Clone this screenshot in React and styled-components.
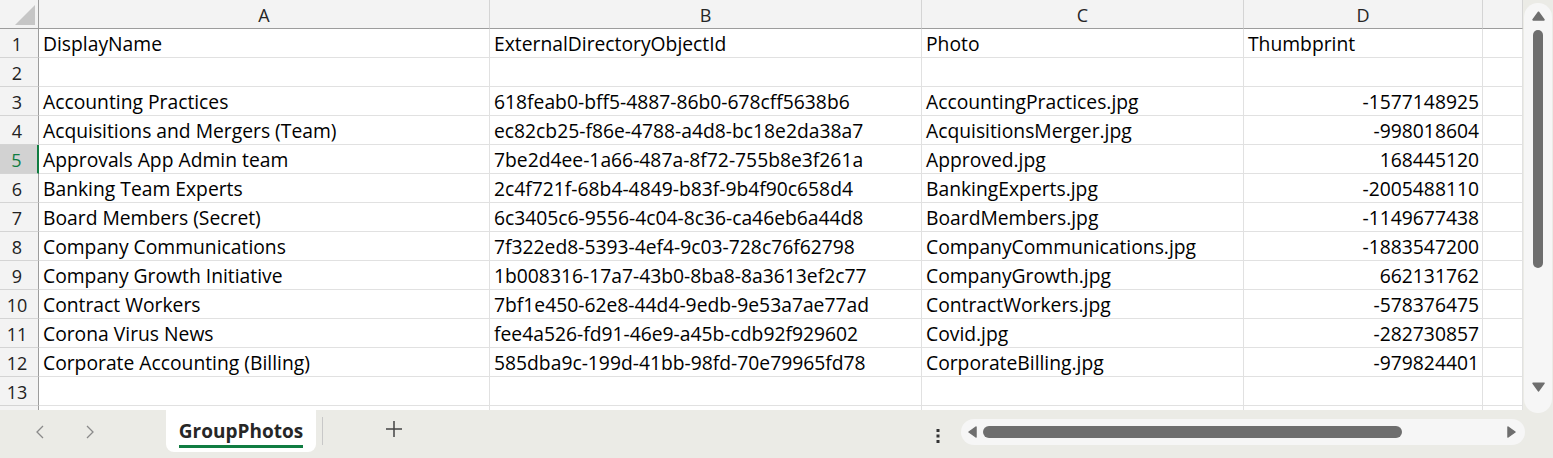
import React from "react"
import styled, { createGlobalStyle } from "styled-components"

const GlobalStyle = createGlobalStyle`
  html, body {
    margin: 0;
    padding: 0;
    background: #ebebe6;
    font-family: "Open Sans", "Noto Sans", sans-serif;
    overflow: hidden;
  }
`

const Window = styled.div`
  width: 1553px;
  height: 458px;
  display: flex;
  flex-direction: column;
  background: #ebebe6;
`

const Main = styled.div`
  display: flex;
  height: 410px;
`

const Sheet = styled.div`
  width: 1523px;
  height: 410px;
  overflow: hidden;
  background: #fff;
  display: grid;
  grid-template-columns: 39px 451px 432px 322px 239px 40px;
  grid-auto-rows: 29px;
  font-size: 19.3px;
`

const Corner = styled.div`
  position: relative;
  background: #f3f3f3;
  border-right: 1px solid #9c9c9c;
  border-bottom: 1px solid #9c9c9c;
  &::after {
    content: "";
    position: absolute;
    right: 3px;
    bottom: 3px;
    width: 0;
    height: 0;
    border-left: 20px solid transparent;
    border-bottom: 20px solid #c6c6c6;
  }
`

const ColHead = styled.div`
  background: #f3f3f3;
  border-right: 1px solid #d4d4d4;
  border-bottom: 1px solid #9c9c9c;
  display: flex;
  align-items: center;
  justify-content: center;
  color: #262626;
  font-size: 18px;
  padding-top: 2px;
`

const RowHead = styled.div`
  background: ${(p) => (p.$active ? "#d2d2d2" : "#f3f3f3")};
  color: ${(p) => (p.$active ? "#107c41" : "#222")};
  border-right: ${(p) => (p.$active ? "2px solid #107c41" : "1px solid #9c9c9c")};
  border-bottom: 1px solid #d4d4d4;
  display: flex;
  align-items: center;
  justify-content: center;
  padding: 1px 4px 0 0;
  font-size: 18px;
`

const Cell = styled.div`
  border-right: 1px solid #e1e1e1;
  border-bottom: 1px solid #e1e1e1;
  display: flex;
  align-items: center;
  justify-content: ${(p) => (p.$num ? "flex-end" : "flex-start")};
  padding: 0 3px 0 4px;
  white-space: nowrap;
  overflow: hidden;
  color: #000;
`

const VScroll = styled.div`
  width: 30px;
  padding: 3px 0 0 1px;
  box-sizing: border-box;
`

const VTrack = styled.div`
  height: 410px;
  width: 28px;
  background: #f6f6f6;
  border-radius: 14px;
  display: flex;
  flex-direction: column;
  align-items: center;
  padding-top: 6px;
  box-sizing: border-box;
`

const VThumb = styled.div`
  width: 10px;
  height: 238px;
  margin-top: 8px;
  border-radius: 5px;
  background: #6e6e6e;
`

const VDown = styled.div`
  margin-top: auto;
  margin-bottom: 15px;
`

const TabBar = styled.div`
  height: 48px;
  display: flex;
  align-items: flex-start;
`

const NavArrows = styled.div`
  display: flex;
  gap: 32px;
  padding: 14px 0 0 33px;
  width: 166px;
  box-sizing: border-box;
`

const Tab = styled.div`
  width: 150px;
  height: 42px;
  background: #fff;
  border-radius: 0 0 8px 8px;
  display: flex;
  justify-content: center;
  padding-top: 9px;
  box-sizing: border-box;
  font-weight: 700;
  font-size: 19px;
  color: #262626;
`

const TabLabel = styled.span`
  border-bottom: 3px solid #107c41;
  height: 26px;
  line-height: 24px;
`

const Divider = styled.div`
  width: 1px;
  height: 28px;
  background: #c8c8c8;
  margin: 7px 0 0 6px;
`

const AddButton = styled.div`
  margin: 10px 0 0 62px;
`

const Spacer = styled.div`
  flex: 1;
`

const Dots = styled.div`
  padding: 16px 21px 0 0;
`

const HTrack = styled.div`
  width: 564px;
  height: 26px;
  margin: 9px 28px 0 0;
  background: #f6f6f6;
  border-radius: 13px;
  display: flex;
  align-items: center;
  padding: 0 8px 0 6px;
  box-sizing: border-box;
`

const HThumb = styled.div`
  width: 419px;
  height: 12px;
  border-radius: 6px;
  background: #6e6e6e;
  margin-left: 4px;
`

const HRight = styled.div`
  margin-left: auto;
  display: flex;
`

const rows = [
  ["DisplayName", "ExternalDirectoryObjectId", "Photo", "Thumbprint"],
  ["", "", "", ""],
  ["Accounting Practices", "618feab0-bff5-4887-86b0-678cff5638b6", "AccountingPractices.jpg", "-1577148925"],
  ["Acquisitions and Mergers (Team)", "ec82cb25-f86e-4788-a4d8-bc18e2da38a7", "AcquisitionsMerger.jpg", "-998018604"],
  ["Approvals App Admin team", "7be2d4ee-1a66-487a-8f72-755b8e3f261a", "Approved.jpg", "168445120"],
  ["Banking Team Experts", "2c4f721f-68b4-4849-b83f-9b4f90c658d4", "BankingExperts.jpg", "-2005488110"],
  ["Board Members (Secret)", "6c3405c6-9556-4c04-8c36-ca46eb6a44d8", "BoardMembers.jpg", "-1149677438"],
  ["Company Communications", "7f322ed8-5393-4ef4-9c03-728c76f62798", "CompanyCommunications.jpg", "-1883547200"],
  ["Company Growth Initiative", "1b008316-17a7-43b0-8ba8-8a3613ef2c77", "CompanyGrowth.jpg", "662131762"],
  ["Contract Workers", "7bf1e450-62e8-44d4-9edb-9e53a7ae77ad", "ContractWorkers.jpg", "-578376475"],
  ["Corona Virus News", "fee4a526-fd91-46e9-a45b-cdb92f929602", "Covid.jpg", "-282730857"],
  ["Corporate Accounting (Billing)", "585dba9c-199d-41bb-98fd-70e79965fd78", "CorporateBilling.jpg", "-979824401"],
  ["", "", "", ""],
  ["", "", "", ""],
]

const Tri = ({ dir, size = 12 }) => {
  const pts = {
    up: "1,10 6,3 11,10",
    down: "1,3 6,10 11,3",
    left: "9,1 2,6 9,11",
    right: "3,1 10,6 3,11",
  }
  return (
    <svg width={size} height={size} viewBox="0 0 12 12">
      <polygon points={pts[dir]} fill="#6e6e6e" stroke="#6e6e6e" strokeWidth="1.5" strokeLinejoin="round" />
    </svg>
  )
}

const Chevron = ({ left }) => (
  <svg width="16" height="16" viewBox="0 0 16 16">
    <path d={left ? "M10 2 L4 8 L10 14" : "M6 2 L12 8 L6 14"} fill="none" stroke="#8a8a8a" strokeWidth="1.3" />
  </svg>
)

export default function App() {
  return (
    <Window>
      <GlobalStyle />
      <Main>
        <Sheet>
          <Corner />
          {["A", "B", "C", "D", ""].map((c, i) => (
            <ColHead key={i}>{c}</ColHead>
          ))}
          {rows.map((r, i) => (
            <React.Fragment key={i}>
              <RowHead $active={i === 4}>{i < 13 ? i + 1 : ""}</RowHead>
              <Cell>{r[0]}</Cell>
              <Cell>{r[1]}</Cell>
              <Cell>{r[2]}</Cell>
              <Cell $num={i > 1}>{r[3]}</Cell>
              <Cell />
            </React.Fragment>
          ))}
        </Sheet>
        <VScroll>
          <VTrack>
            <Tri dir="up" size={13} />
            <VThumb />
            <VDown>
              <Tri dir="down" size={13} />
            </VDown>
          </VTrack>
        </VScroll>
      </Main>
      <TabBar>
        <NavArrows>
          <Chevron left />
          <Chevron />
        </NavArrows>
        <Tab>
          <TabLabel>GroupPhotos</TabLabel>
        </Tab>
        <Divider />
        <AddButton>
          <svg width="18" height="18" viewBox="0 0 18 18">
            <path d="M9 1 V17 M1 9 H17" stroke="#444" strokeWidth="1.5" />
          </svg>
        </AddButton>
        <Spacer />
        <Dots>
          <svg width="4" height="14" viewBox="0 0 4 14">
            <rect x="0.5" y="0" width="3" height="3" fill="#333" />
            <rect x="0.5" y="5.5" width="3" height="3" fill="#333" />
            <rect x="0.5" y="11" width="3" height="3" fill="#333" />
          </svg>
        </Dots>
        <HTrack>
          <Tri dir="left" />
          <HThumb />
          <HRight>
            <Tri dir="right" />
          </HRight>
        </HTrack>
      </TabBar>
    </Window>
  )
}
